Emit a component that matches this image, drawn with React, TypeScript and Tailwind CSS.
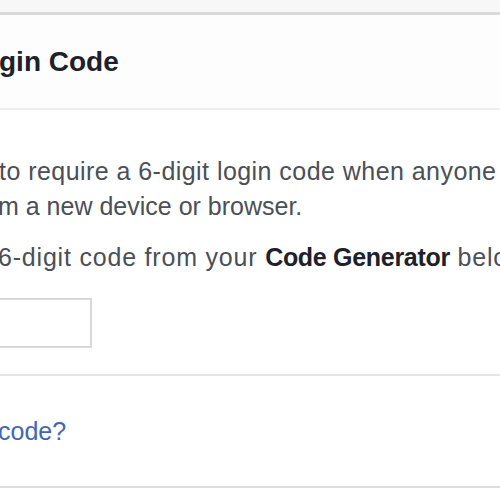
export default function App() {
  return (
    <div className="w-[500px] h-[500px] overflow-hidden bg-white font-['Liberation_Sans',Arial,sans-serif]">
      {/* page strip above the dialog */}
      <div className="h-[15px] bg-[#f7f7f7] border-b-[3px] border-[#d9d9d9]" />

      {/* dialog header */}
      <div className="h-[95px] flex items-center bg-[#fdfdfd] border-b-2 border-[#ededed]">
        <h1 className="-ml-[1px] text-[28px] font-bold text-[#1d2129] leading-none">gin Code</h1>
      </div>

      {/* dialog body */}
      <div className="flex flex-col pt-[44px] pb-[26px] border-b-2 border-[#e6e6e6]">
        <p className="text-[25px] leading-[35px] text-[#4b4f56] whitespace-nowrap">
          <span className="block -ml-[1px] tracking-[0.45px]">to require a 6-digit login code when anyone t</span>
          <span className="block -ml-[2px]">m a new device or browser.</span>
        </p>
        <p className="mt-[16px] text-[25px] leading-[35px] text-[#4b4f56] whitespace-nowrap -ml-[2px] tracking-[0.8px]">
          6-digit code from your <span className="font-bold text-[#1d2129] tracking-[-0.3px]">Code Generator</span> below
        </p>
        <input
          type="text"
          className="mt-[23px] -ml-[4px] w-[96px] h-[50px] border-2 border-[#d8d8d8] bg-white outline-none"
        />
      </div>

      {/* dialog footer */}
      <div className="h-[112px] flex items-center border-b-2 border-[#dedede]">
        <a className="-ml-[2px] text-[25px] text-[#4267b2] leading-none">code?</a>
      </div>
    </div>
  );
}
